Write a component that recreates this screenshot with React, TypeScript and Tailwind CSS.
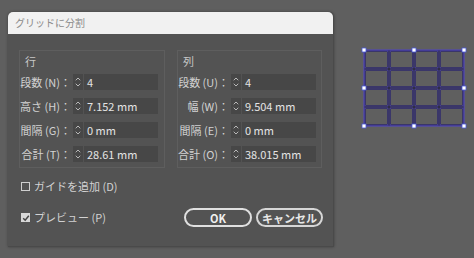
import { ChevronUp, ChevronDown } from "lucide-react";

const font = { fontFamily: '"Noto Sans CJK JP", "Noto Sans", sans-serif' };

type Row = { label: string; value: string };

const rows: Row[] = [
  { label: "段数 (N)：", value: "4" },
  { label: "高さ (H)：", value: "7.152 mm" },
  { label: "間隔 (G)：", value: "0 mm" },
  { label: "合計 (T)：", value: "28.61 mm" },
];

const cols: Row[] = [
  { label: "段数 (U)：", value: "4" },
  { label: "幅 (W)：", value: "9.504 mm" },
  { label: "間隔 (E)：", value: "0 mm" },
  { label: "合計 (O)：", value: "38.015 mm" },
];

const Spinner = () => (
  <div className="flex flex-col items-center justify-center w-[10px] h-[16px] bg-[#474747] text-[#cfcfcf]">
    <ChevronUp size={8} strokeWidth={2.5} className="-mb-[1px]" />
    <ChevronDown size={8} strokeWidth={2.5} className="-mt-[1px]" />
  </div>
);

const Field = ({ label, value, labelW }: Row & { labelW: string }) => (
  <div className="flex items-center h-[16px]">
    <span className={`${labelW} text-right pr-[2px] whitespace-nowrap`}>{label}</span>
    <Spinner />
    <div className="ml-[1px] w-[74px] h-[16px] bg-[#474747] pl-[3px] leading-[16px] text-[#e4e4e4]">
      {value}
    </div>
  </div>
);

const Group = ({ title, items, labelW, w }: { title: string; items: Row[]; labelW: string; w: string }) => (
  <div className={`${w} h-[118px] border border-[#5e5e5e] pt-[2px]`}>
    <div className="pl-[5px] h-[16px] leading-[16px] text-[#c8c8c8]">{title}</div>
    <div className="flex flex-col gap-[8px] mt-[5px]">
      {items.map((r) => (
        <Field key={r.label} {...r} labelW={labelW} />
      ))}
    </div>
  </div>
);

const GridPreview = () => {
  const xs = [364, 389, 414, 439];
  const ys = [50, 69, 88, 107];
  const handles = [
    [364, 50], [414, 50], [464, 50],
    [364, 88], [464, 88],
    [364, 126], [414, 126], [464, 126],
  ];
  return (
    <svg width="474" height="258" className="absolute left-0 top-0 pointer-events-none">
      {xs.map((x) =>
        ys.map((y) => (
          <g key={`${x}-${y}`}>
            <rect x={x + 1} y={y + 1} width={23} height={17} fill="none" stroke="#2a2a32" strokeWidth={2} />
            <rect x={x + 1} y={y + 1} width={23} height={17} fill="none" stroke="#5b4fd0" strokeWidth={0.7} />
          </g>
        ))
      )}
      <rect x={364} y={50} width={100} height={76} fill="none" stroke="#4f43c8" strokeWidth={1} />
      {handles.map(([x, y]) => (
        <rect key={`${x}-${y}`} x={x - 2} y={y - 2} width={4} height={4} fill="#ffffff" stroke="#4a5ad8" strokeWidth={0.8} />
      ))}
    </svg>
  );
};

export default function App() {
  return (
    <div className="relative w-[474px] h-[258px] bg-[#5f5f5f] overflow-hidden text-[11px] text-[#d2d2d2]" style={font}>
      <div className="ml-[8px] pt-[12px]">
        <div className="w-[326px] h-[235px] bg-[#535353] rounded-t-[5px] shadow-[0_0_3px_rgba(0,0,0,0.35)] border-r border-b border-[#4a4a4a]">
          <div className="h-[22px] bg-[#f1f1f1] rounded-t-[5px] pl-[7px] leading-[22px] text-[10px] text-[#8a8a8a]">
            グリッドに分割
          </div>
          <div className="flex gap-[12px] pl-[11px] pt-[16px]">
            <Group title="行" items={rows} labelW="w-[53px]" w="w-[146px]" />
            <Group title="列" items={cols} labelW="w-[53px]" w="w-[145px]" />
          </div>
          <div className="flex items-center pl-[13px] mt-[11px] h-[14px]">
            <div className="w-[9px] h-[9px] border border-[#cfcfcf] mr-[4px]" />
            <span>ガイドを追加 (D)</span>
          </div>
          <div className="flex items-center justify-between pl-[13px] pr-[10px] mt-[15px]">
            <div className="flex items-center">
              <div className="w-[9px] h-[9px] bg-[#d8d8d8] mr-[4px] flex items-center justify-center">
                <svg width="8" height="8" viewBox="0 0 8 8">
                  <path d="M1.2 4.2 L3.2 6.2 L6.8 1.8" fill="none" stroke="#444" strokeWidth="1.5" />
                </svg>
              </div>
              <span>プレビュー (P)</span>
            </div>
            <div className="flex gap-[4px]">
              <button className="w-[68px] h-[19px] rounded-full border-2 border-[#e0e0e0] text-[11px] leading-[14px] font-bold text-[#f0f0f0]">
                OK
              </button>
              <button className="w-[67px] h-[19px] rounded-full border-2 border-[#d6d6d6] text-[11px] leading-[14px] font-bold text-[#e8e8e8]">
                キャンセル
              </button>
            </div>
          </div>
        </div>
      </div>
      <GridPreview />
    </div>
  );
}
